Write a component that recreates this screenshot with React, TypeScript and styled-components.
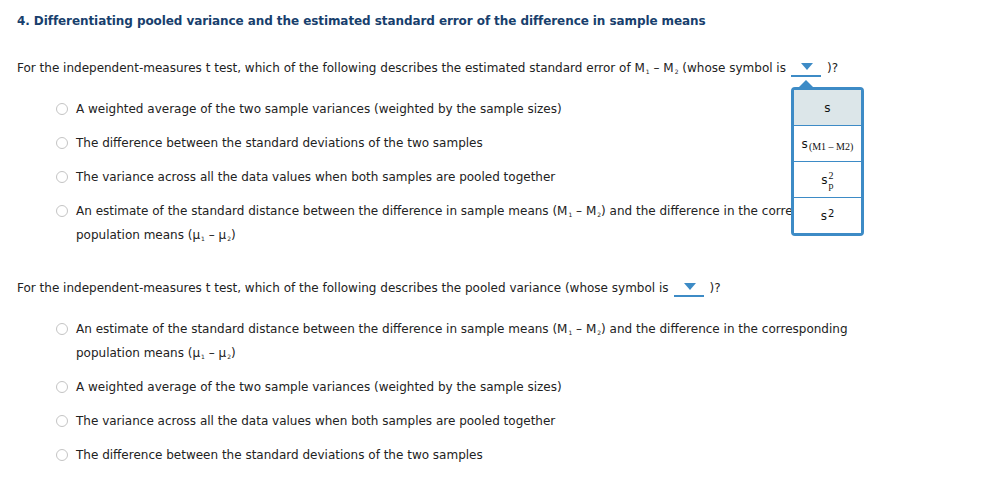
import React from "react";
import styled, { createGlobalStyle } from "styled-components";

const Global = createGlobalStyle`
  html, body { margin: 0; padding: 0; background: #fff; }
  body { font-family: "DejaVu Sans", Verdana, sans-serif; font-size: 12px; color: #222; }
`;

const Page = styled.div`
  padding: 9px 17px 0 17px;
  width: 997px;
  height: 481px;
  box-sizing: border-box;
  overflow: hidden;
`;

const Title = styled.h1`
  margin: 0;
  font-size: 12px;
  line-height: 24px;
  font-weight: bold;
  letter-spacing: -0.08px;
  color: #183f6d;
`;

const Question = styled.p<{ $top: number }>`
  margin: ${(p) => p.$top}px 0 17px 0;
  line-height: 24px;
  white-space: nowrap;
`;

const Options = styled.ul`
  list-style: none;
  margin: 0;
  padding: 0 0 0 39px;
  display: flex;
  flex-direction: column;
  gap: 10px;
`;

const Option = styled.li`
  display: grid;
  grid-template-columns: 20px 1fr;
  line-height: 24px;
`;

const Radio = styled.span`
  width: 12px;
  height: 12px;
  margin-top: 6px;
  border-radius: 50%;
  border: 1px solid #c4c4c4;
  box-sizing: border-box;
  background: #fff;
`;

const OptText = styled.span`
  white-space: nowrap;
`;

const Sub = styled.sub`
  font-size: 6px;
  vertical-align: -2px;
  line-height: 0;
  margin-left: 1px;
`;

const Drop = styled.span`
  position: relative;
  display: inline-block;
  width: 30px;
  height: 16px;
  margin: 0 6px 0 5px;
  vertical-align: -5px;
  border-bottom: 2px solid #3d8bc6;
`;

const Caret = styled.span`
  position: absolute;
  left: 10px;
  top: 4px;
  width: 0;
  height: 0;
  border-left: 6px solid transparent;
  border-right: 6px solid transparent;
  border-top: 7px solid #3d8bc6;
`;

const Popup = styled.div`
  position: absolute;
  left: 0;
  top: 28px;
  width: 73px;
  box-sizing: border-box;
  border: 3px solid #3d8bc6;
  border-radius: 4px;
  background: #fff;
  z-index: 5;
  &::before {
    content: "";
    position: absolute;
    left: 5px;
    top: -10px;
    border-left: 7px solid transparent;
    border-right: 7px solid transparent;
    border-bottom: 7px solid #3d8bc6;
  }
`;

const Item = styled.div<{ $active?: boolean }>`
  height: 35px;
  display: flex;
  align-items: center;
  justify-content: center;
  background: ${(p) => (p.$active ? "#dce6e9" : "#fff")};
  color: #111;
  font-size: 12px;
  white-space: nowrap;
  & + & { border-top: 1px solid #3d8bc6; }
`;

const SerifSub = styled.span`
  font-family: "Liberation Serif", "Times New Roman", serif;
  font-size: 10px;
  position: relative;
  top: 3px;
  margin-left: 1px;
`;

const Stack = styled.span`
  display: inline-flex;
  flex-direction: column;
  font-family: "Liberation Serif", "Times New Roman", serif;
  font-size: 10px;
  line-height: 10px;
  margin-left: 1px;
  position: relative;
  top: 1px;
`;

const Sup = styled.span`
  font-size: 10px;
  line-height: 10px;
  align-self: flex-start;
  margin-top: 11px;
  margin-left: 1px;
`;

const M = ({ n }: { n: number }) => (
  <>
    M<Sub>{n}</Sub>
  </>
);
const Mu = ({ n }: { n: number }) => (
  <>
    μ<Sub>{n}</Sub>
  </>
);

export default function App() {
  return (
    <Page>
      <Global />
      <Title>4. Differentiating pooled variance and the estimated standard error of the difference in sample means</Title>

      <Question $top={23}>
        For the independent-measures t test, which of the following describes the estimated standard error of <M n={1} /> – <M n={2} /> (whose symbol is
        <Drop>
          <Caret />
          <Popup>
            <Item $active>s</Item>
            <Item>
              s<SerifSub>(M1 – M2)</SerifSub>
            </Item>
            <Item>
              s
              <Stack>
                <span>2</span>
                <span>p</span>
              </Stack>
            </Item>
            <Item>
              s<Sup>2</Sup>
            </Item>
          </Popup>
        </Drop>
        )?
      </Question>
      <Options>
        <Option>
          <Radio />
          <OptText>A weighted average of the two sample variances (weighted by the sample sizes)</OptText>
        </Option>
        <Option>
          <Radio />
          <OptText>The difference between the standard deviations of the two samples</OptText>
        </Option>
        <Option>
          <Radio />
          <OptText>The variance across all the data values when both samples are pooled together</OptText>
        </Option>
        <Option>
          <Radio />
          <OptText>
            An estimate of the standard distance between the difference in sample means (<M n={1} /> – <M n={2} />) and the difference in the corresponding
            <br />
            population means (<Mu n={1} /> – <Mu n={2} />)
          </OptText>
        </Option>
      </Options>

      <Question $top={29}>
        For the independent-measures t test, which of the following describes the pooled variance (whose symbol is
        <Drop>
          <Caret />
        </Drop>
        )?
      </Question>
      <Options>
        <Option>
          <Radio />
          <OptText>
            An estimate of the standard distance between the difference in sample means (<M n={1} /> – <M n={2} />) and the difference in the corresponding
            <br />
            population means (<Mu n={1} /> – <Mu n={2} />)
          </OptText>
        </Option>
        <Option>
          <Radio />
          <OptText>A weighted average of the two sample variances (weighted by the sample sizes)</OptText>
        </Option>
        <Option>
          <Radio />
          <OptText>The variance across all the data values when both samples are pooled together</OptText>
        </Option>
        <Option>
          <Radio />
          <OptText>The difference between the standard deviations of the two samples</OptText>
        </Option>
      </Options>
    </Page>
  );
}
